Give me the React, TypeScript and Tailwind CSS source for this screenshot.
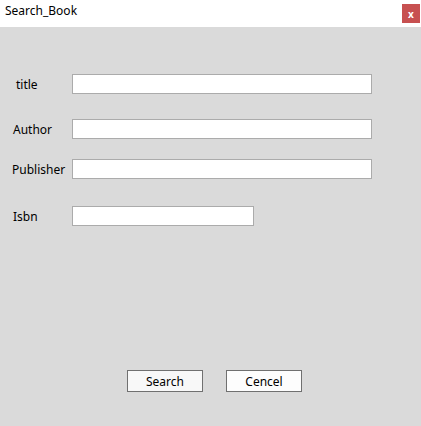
import React from "react";

const rows = [
  { label: "title", pad: "pl-[16px]", mt: "mt-[47px]", w: "w-[300px]" },
  { label: "Author", pad: "pl-[13px]", mt: "mt-[25px]", w: "w-[300px]" },
  { label: "Publisher", pad: "pl-[12px]", mt: "mt-[20px]", w: "w-[300px]" },
  { label: "Isbn", pad: "pl-[13px]", mt: "mt-[27px]", w: "w-[182px]" },
];

export default function App() {
  return (
    <div className="flex h-[426px] w-[421px] flex-col bg-[#dadada] font-['Noto_Sans','Liberation_Sans',sans-serif] text-[12px] text-black">
      {/* title bar */}
      <div className="flex h-[27px] items-start justify-between bg-white">
        <span className="pl-[5px] pt-[3px] leading-[16px]">Search_Book</span>
        <button className="mr-[1px] mt-[4px] flex h-[19px] w-[18px] items-center justify-center bg-[#c75050] text-[10px] font-bold leading-none text-white">
          x
        </button>
      </div>

      {/* form */}
      <div className="flex flex-col">
        {rows.map((r) => (
          <div key={r.label} className={`flex items-center ${r.mt}`}>
            <span className={`w-[72px] pt-[2px] leading-[16px] ${r.pad}`}>
              {r.label}
            </span>
            <input
              className={`h-[20px] ${r.w} border border-[#ababab] bg-white px-[3px] outline-none`}
            />
          </div>
        ))}
      </div>

      <div className="mt-[144px] flex gap-[23px] pl-[127px]">
        <button className="h-[22px] w-[76px] border border-[#707070] bg-[#f8f8f8] pt-[2px] leading-[18px]">
          Search
        </button>
        <button className="h-[22px] w-[76px] border border-[#707070] bg-[#fdfdfd] pt-[2px] leading-[18px]">
          Cencel
        </button>
      </div>
    </div>
  );
}
